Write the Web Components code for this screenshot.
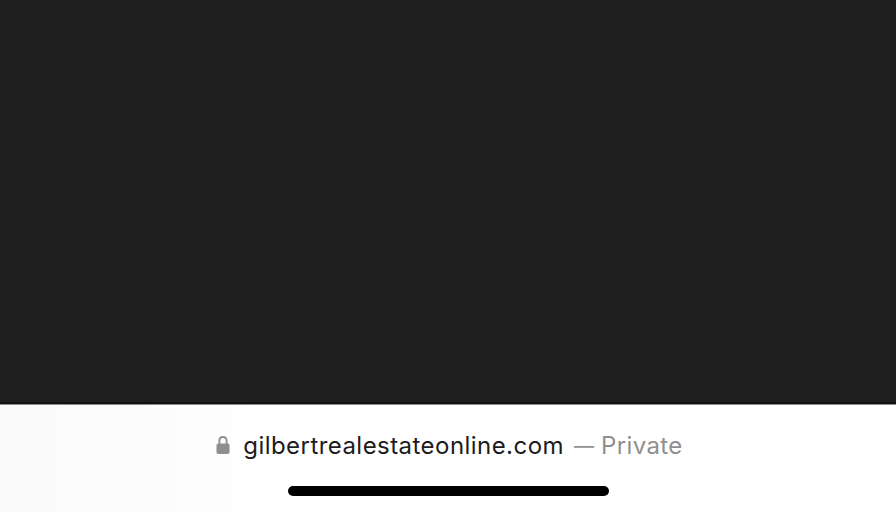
<!DOCTYPE html>
<html>
<head>
<meta charset="utf-8">
<style>
  html, body { margin: 0; padding: 0; height: 100%; }
  body { width: 896px; height: 512px; overflow: hidden; display: flex; flex-direction: column; }
</style>
</head>
<body>
<page-content></page-content>
<address-bar domain="gilbertrealestateonline.com" status="Private"></address-bar>
<script>
class PageContent extends HTMLElement {
  constructor() {
    super();
    const shadowRoot = this.attachShadow( {mode: 'open'} );
    shadowRoot.innerHTML = `
      <style>
        :host {
          background-color: #1f1f1f;
          box-sizing: border-box;
          display: block;
          flex-grow: 1;
          border-bottom: 2px solid #111111;
        }
      </style>
    `;
  }
}

class AddressBar extends HTMLElement {
  constructor() {
    super();
    const shadowRoot = this.attachShadow( {mode: 'open'} );
    shadowRoot.innerHTML = `
      <style>
        :host {
          background: linear-gradient( 90deg, #fafafa 0, #fcfcfc 170px, #ffffff 260px );
          border-top: 1px solid #8c8c8c;
          box-sizing: border-box;
          display: flex;
          flex-direction: column;
          align-items: center;
          height: 108px;
        }

        .row {
          align-items: center;
          display: flex;
          font-family: 'Inter', sans-serif;
          font-size: 24px;
          font-weight: 400;
          height: 34px;
          line-height: 34px;
          margin-top: 24px;
          padding-left: 3px;
          white-space: nowrap;
        }

        svg {
          display: block;
          margin-bottom: 2px;
          margin-right: 13px;
        }

        .domain {
          color: #1c1c1c;
          letter-spacing: 0.45px;
        }

        .dash {
          color: #8f8f8f;
          font-size: 20px;
          margin-left: 10px;
          margin-right: 7px;
        }

        .status {
          color: #8f8f8f;
          letter-spacing: 0.4px;
        }

        .home {
          background: #000000;
          border-radius: 5px;
          height: 10px;
          margin-top: 23px;
          width: 321px;
        }
      </style>
      <div class="row">
        <svg width="14" height="20" viewBox="0 0 14 20">
          <path d="M3.4 9V5.8C3.4 3.4 5 2 7 2s3.6 1.4 3.6 3.8V9" fill="none" stroke="#8e8e8e" stroke-width="1.9"/>
          <rect x="0.5" y="8.5" width="13" height="10.5" rx="1.8" fill="#8e8e8e"/>
        </svg>
        <span class="domain"></span>
        <span class="dash">\u2014</span>
        <span class="status"></span>
      </div>
      <div class="home"></div>
    `;
    shadowRoot.querySelector( '.domain' ).textContent = this.getAttribute( 'domain' );
    shadowRoot.querySelector( '.status' ).textContent = this.getAttribute( 'status' );
  }
}

window.customElements.define( 'page-content', PageContent );
window.customElements.define( 'address-bar', AddressBar );
</script>
</body>
</html>
